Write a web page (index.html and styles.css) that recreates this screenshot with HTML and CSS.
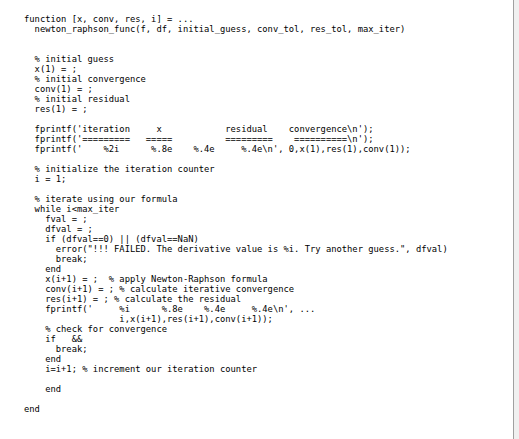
FILE: index.html
```html
<!DOCTYPE html>
<html lang="en">
<head>
<meta charset="utf-8">
<title>newton_raphson_func.m</title>
<link rel="stylesheet" href="styles.css">
</head>
<body>
<div class="window">
<main class="editor">
<pre class="code">function [x, conv, res, i] = ...
  newton_raphson_func(f, df, initial_guess, conv_tol, res_tol, max_iter)


  % initial guess
  x(1) = ;
  % initial convergence
  conv(1) = ;
  % initial residual
  res(1) = ;

  fprintf('iteration     x            residual    convergence\n');
  fprintf('=========   =====          =========    ==========\n');
  fprintf('    %2i      %.8e    %.4e     %.4e\n', 0,x(1),res(1),conv(1));

  % initialize the iteration counter
  i = 1;

  % iterate using our formula
  while i&lt;max_iter
    fval = ;
    dfval = ;
    if (dfval==0) || (dfval==NaN)
      error("!!! FAILED. The derivative value is %i. Try another guess.", dfval)
      break;
    end
    x(i+1) = ;  % apply Newton-Raphson formula
    conv(i+1) = ; % calculate iterative convergence
    res(i+1) = ; % calculate the residual
    fprintf('     %i      %.8e    %.4e     %.4e\n', ...
                  i,x(i+1),res(i+1),conv(i+1));
    % check for convergence
    if   &amp;&amp;
      break;
    end
    i=i+1; % increment our iteration counter

    end

end</pre>
</main>
<div class="scroll-edge"></div>
</div>
</body>
</html>
```

FILE: styles.css
```css
html, body {
  margin: 0;
  padding: 0;
  background: #ffffff;
}

.window {
  display: flex;
  width: 519px;
  height: 439px;
  overflow: hidden;
}

.editor {
  flex: 0 0 514px;
  box-sizing: border-box;
  background: #ffffff;
  border-right: 1px solid #a0a0a0;
}

.scroll-edge {
  flex: 1 1 auto;
  background: #f0f0f0;
}

.code {
  margin: 0;
  padding: 14px 0 0 24px;
  font-family: "DejaVu Sans Mono", monospace;
  font-size: 8.8px;
  line-height: 10px;
  color: #000000;
  white-space: pre;
}
```
